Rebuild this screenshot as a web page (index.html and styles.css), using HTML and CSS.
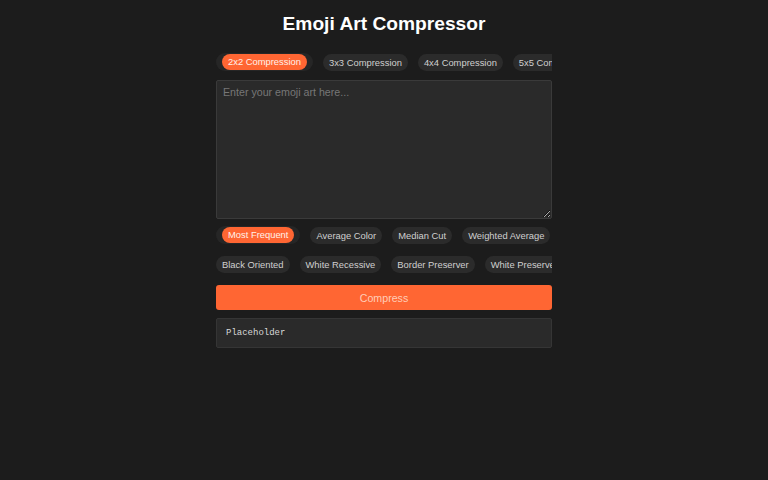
FILE: index.html
```html
<!DOCTYPE html>
<html>
<head>
<meta charset="utf-8">
<link rel="stylesheet" href="styles.css">
</head>
<body>
<main class="app">
  <h1 class="title">Emoji Art Compressor</h1>
  <div class="options sizes">
    <span class="opt selected"><span class="opt-inner">2x2 Compression</span></span>
    <span class="opt">3x3 Compression</span>
    <span class="opt">4x4 Compression</span>
    <span class="opt">5x5 Compression</span>
  </div>
  <textarea class="input" placeholder="Enter your emoji art here..."></textarea>
  <div class="options methods">
    <span class="opt selected"><span class="opt-inner">Most Frequent</span></span>
    <span class="opt">Average Color</span>
    <span class="opt">Median Cut</span>
    <span class="opt">Weighted Average</span>
  </div>
  <div class="options methods2">
    <span class="opt">Black Oriented</span>
    <span class="opt">White Recessive</span>
    <span class="opt">Border Preserver</span>
    <span class="opt">White Preserver</span>
  </div>
  <button class="compress">Compress</button>
  <pre class="output">Placeholder</pre>
</main>
</body>
</html>
```
FILE: styles.css
```css
html, body {
  margin: 0;
  padding: 0;
  background: #1c1c1c;
  height: 100%;
}
body {
  font-family: "Liberation Sans", Arial, sans-serif;
  color: #e8e8e8;
}
.app {
  width: 336px;
  margin: 0 auto;
  display: flex;
  flex-direction: column;
}
.title {
  margin: 13px 0 0;
  font-size: 19.2px;
  line-height: 22px;
  text-align: center;
  color: #ffffff;
  font-weight: bold;
}
.options {
  display: flex;
  gap: 10px;
  overflow: hidden;
  white-space: nowrap;
  flex-wrap: nowrap;
  align-items: center;
}
.sizes {
  margin-top: 18px;
}
.opt {
  flex: none;
  display: inline-block;
  background: #2b2b2b;
  color: #d0d0d0;
  font-size: 9.4px;
  line-height: 17px;
  height: 17px;
  padding: 0 6px;
  border-radius: 9px;
}
.opt.selected {
  background: #262626;
  padding: 1px 6px;
  height: auto;
  border-radius: 10px;
}
.opt-inner {
  display: block;
  background: #ff6633;
  color: #fff1ea;
  padding: 0 6px;
  height: 16px;
  line-height: 16px;
  border-radius: 8px;
}
.input {
  margin-top: 9px;
  box-sizing: border-box;
  width: 336px;
  height: 139px;
  background: #2a2a2a;
  border: 1px solid #3a3a3a;
  border-radius: 2px;
  color: #e0e0e0;
  font-family: "Liberation Sans", Arial, sans-serif;
  font-size: 10.67px;
  padding: 5px 6px;
  resize: vertical;
  outline: none;
}
.input::placeholder {
  color: #777777;
}
.methods {
  margin-top: 7px;
}
.methods2 {
  margin-top: 12px;
}
.compress {
  margin-top: 12px;
  height: 25px;
  width: 336px;
  border: none;
  border-radius: 3px;
  background: #ff6633;
  color: #ffcdb8;
  font-family: "Liberation Sans", Arial, sans-serif;
  font-size: 10.67px;
  cursor: pointer;
}
.output {
  margin: 8px 0 0;
  box-sizing: border-box;
  height: 30px;
  background: #2a2a2a;
  border: 1px solid #353535;
  border-radius: 2px;
  padding: 8px 9px;
  font-family: "Liberation Mono", "Courier New", monospace;
  font-size: 9px;
  line-height: 12px;
  color: #d8d8d8;
}
```
